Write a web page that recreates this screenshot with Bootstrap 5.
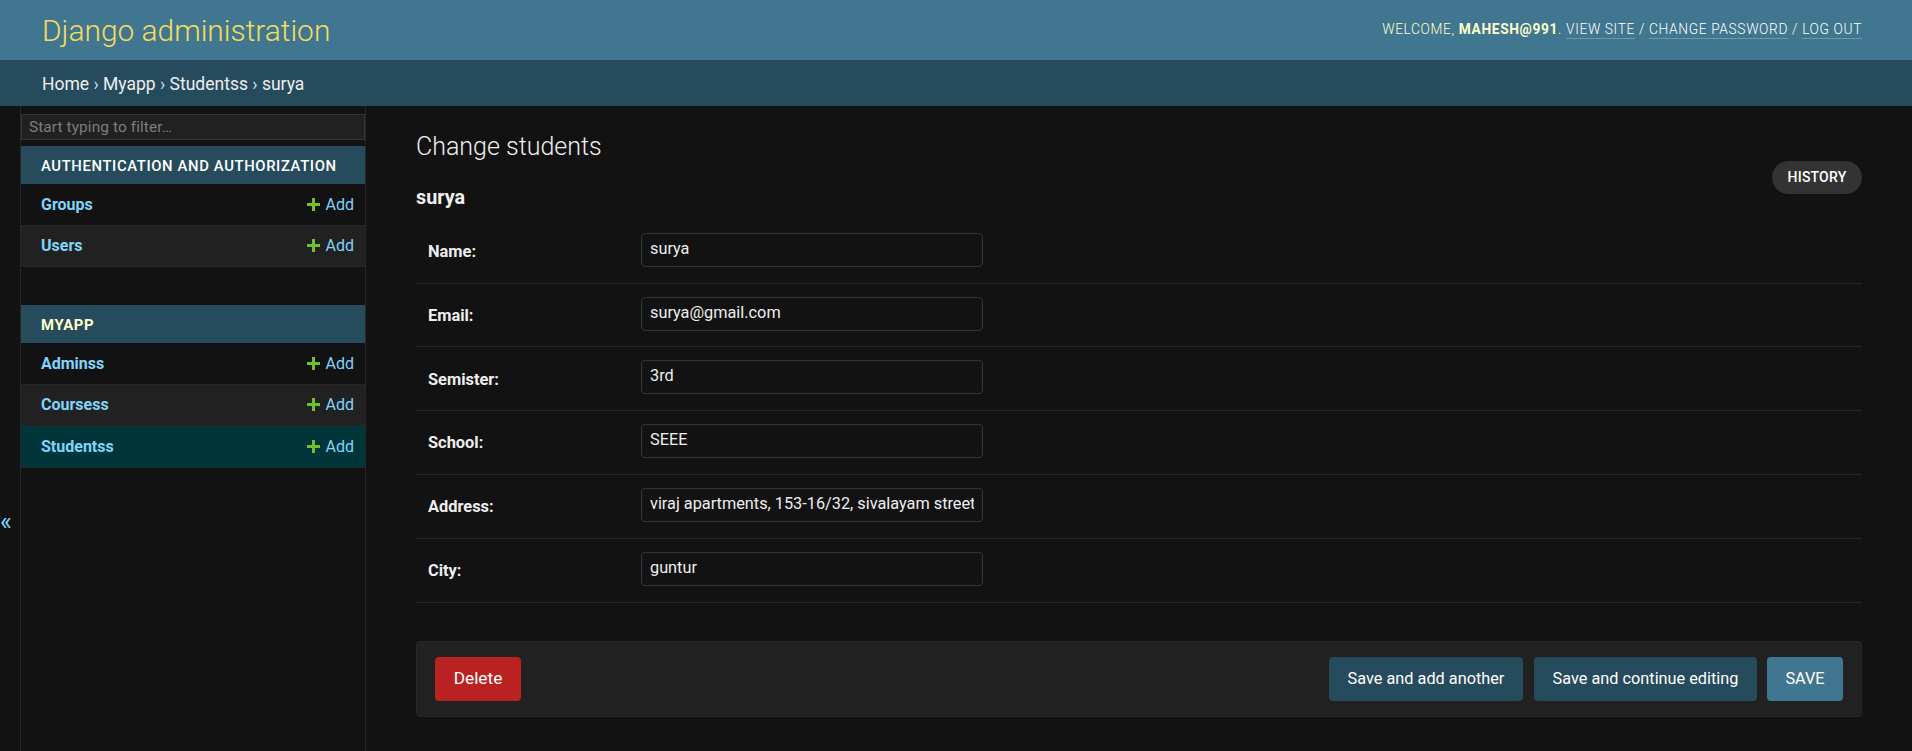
<!DOCTYPE html>
<html lang="en">
<head>
<meta charset="utf-8">
<title>Change students | Django site admin</title>
<link href="https://cdn.jsdelivr.net/npm/bootstrap@5.3.0/dist/css/bootstrap.min.css" rel="stylesheet">
<style>
html,body{height:100%;overflow:hidden}
body{background:#121212;color:#eee;font-family:Roboto,"Liberation Sans",sans-serif;font-size:15px}
a{text-decoration:none;color:#81d4fa}
.dj-header{height:60px;background:#417690;padding:0 50px 0 42px;color:#ffc}
.dj-brand{font-size:29.9px;font-weight:300;color:#f5dd5d;margin:2px 0 0;line-height:1}
.dj-tools{font-size:13.75px;font-weight:300;letter-spacing:.63px;text-transform:uppercase;padding-bottom:1px}
.dj-tools strong{font-weight:700}
.dj-tools a{color:#fff;border-bottom:1px solid rgba(255,255,255,.25);padding-bottom:1px}
.dj-crumbs{height:46px;background:#264b5d;padding-left:42px;padding-top:2px;font-size:17.5px;color:#c4dce8}
.dj-crumbs a{color:#eee}
.dj-crumbs span{color:#eee}
.dj-shell{height:645px}
.dj-toggle{width:21px;flex:none;color:#81d4fa;font-size:25px;line-height:1;padding-top:403px;border-right:1px solid #272727}
.dj-side{width:345px;flex:none;border-right:1px solid #272727;padding-top:8px}
.dj-filter{display:block;width:100%;height:26px;background:#212121;border:1px solid #353535;color:#eee;font-size:15.4px;font-weight:400;padding:0 7px;margin-bottom:6px;outline:0;letter-spacing:.1px}
.dj-filter::placeholder{color:#7d7d7d;opacity:1}
.dj-app{margin-bottom:38px}
.dj-caption{height:38px;background:#264b5d;padding:2px 0 0 20px;font-size:14.85px;font-weight:500;letter-spacing:.62px;text-transform:uppercase;color:#fff}
.dj-yellow{color:#ffc;font-weight:700}
.dj-model{height:41.5px;padding:1px 11px 0 20px;border-bottom:1px solid #272727;font-size:16px}
.dj-model b{font-weight:700;color:#81d4fa}
.dj-alt{background:#212121}
.dj-current{background:#00363a}
.dj-addlink svg{margin-right:6px;vertical-align:-1px}
.dj-main{padding:0 50px 0 50px;position:relative}
.dj-title{font-size:25px;font-weight:300;color:#eee;margin:0;padding-top:26px;line-height:30px}
.dj-history{background:#333;color:#fff;height:33px;width:90px;border-radius:17px;font-size:14px;font-weight:500;letter-spacing:.2px;text-transform:uppercase;position:absolute;right:50px;top:55px}
.dj-objname{font-size:19.8px;font-weight:700;margin:0;padding-top:24px;line-height:24px;color:#eee}
.dj-fields{margin-top:9.8px}
.dj-row{height:63.85px;border-bottom:1px solid #272727;padding-left:12px}
.dj-row label{width:213px;font-weight:700;font-size:16.4px;margin:2px 0 0;color:#eee;flex:none}
.dj-input{width:342px;height:34px;background:#121212;border:1px solid #353535;border-radius:4px;color:#eee;font-size:16.3px;padding:0 8px 3px;outline:0;margin-bottom:3px}
.dj-actions{margin-top:38px;height:76px;background:#212121;border:1px solid #272727;border-radius:4px;padding:0 18px}
.dj-btn{height:44px;border:0;border-radius:4px;color:#fff;font-size:16.3px;padding:0;background:#264b5d}
.dj-btn:hover{color:#fff;background:#264b5d}
.dj-del{background:#ba2121;width:86px;font-size:17.3px}
.dj-del:hover{background:#ba2121}
.dj-sa{width:194px;margin-right:11px}.dj-sc{width:223px;margin-right:10px}
.dj-save{background:#417690;width:76px;text-transform:uppercase}
.dj-save:hover{background:#417690}
</style>
</head>
<body>
<header class="dj-header d-flex justify-content-between align-items-center">
  <h1 class="dj-brand">Django administration</h1>
  <div class="dj-tools">Welcome, <strong>mahesh@991</strong>. <a href="#">View site</a> / <a href="#">Change password</a> / <a href="#">Log out</a></div>
</header>
<nav class="dj-crumbs d-flex align-items-center"><a href="#">Home</a>&nbsp;›&nbsp;<a href="#">Myapp</a>&nbsp;›&nbsp;<a href="#">Studentss</a>&nbsp;›&nbsp;<span>surya</span></nav>
<div class="dj-shell d-flex">
  <div class="dj-toggle">«</div>
  <aside class="dj-side">
    <input class="dj-filter" placeholder="Start typing to filter…">
    <section class="dj-app">
      <div class="dj-caption d-flex align-items-center">Authentication and Authorization</div>
      <div class="dj-model d-flex justify-content-between align-items-center"><a href="#"><b>Groups</b></a><a class="dj-addlink" href="#"><svg width="13" height="13" viewBox="0 0 13 13"><path fill="#70bf2b" d="M5 0h3v5h5v3H8v5H5V8H0V5h5z"/></svg>Add</a></div>
      <div class="dj-model dj-alt d-flex justify-content-between align-items-center"><a href="#"><b>Users</b></a><a class="dj-addlink" href="#"><svg width="13" height="13" viewBox="0 0 13 13"><path fill="#70bf2b" d="M5 0h3v5h5v3H8v5H5V8H0V5h5z"/></svg>Add</a></div>
    </section>
    <section>
      <div class="dj-caption dj-yellow d-flex align-items-center">Myapp</div>
      <div class="dj-model d-flex justify-content-between align-items-center"><a href="#"><b>Adminss</b></a><a class="dj-addlink" href="#"><svg width="13" height="13" viewBox="0 0 13 13"><path fill="#70bf2b" d="M5 0h3v5h5v3H8v5H5V8H0V5h5z"/></svg>Add</a></div>
      <div class="dj-model dj-alt d-flex justify-content-between align-items-center"><a href="#"><b>Coursess</b></a><a class="dj-addlink" href="#"><svg width="13" height="13" viewBox="0 0 13 13"><path fill="#70bf2b" d="M5 0h3v5h5v3H8v5H5V8H0V5h5z"/></svg>Add</a></div>
      <div class="dj-model dj-current d-flex justify-content-between align-items-center"><a href="#"><b>Studentss</b></a><a class="dj-addlink" href="#"><svg width="13" height="13" viewBox="0 0 13 13"><path fill="#70bf2b" d="M5 0h3v5h5v3H8v5H5V8H0V5h5z"/></svg>Add</a></div>
    </section>
  </aside>
  <main class="dj-main flex-grow-1">
    <h2 class="dj-title">Change students</h2>
    <a class="dj-history d-flex align-items-center justify-content-center" href="#">History</a>
    <h3 class="dj-objname">surya</h3>
    <form>
      <div class="dj-fields">
        <div class="dj-row d-flex align-items-center"><label>Name:</label><input class="dj-input" value="surya"></div>
        <div class="dj-row d-flex align-items-center"><label>Email:</label><input class="dj-input" value="surya@gmail.com"></div>
        <div class="dj-row d-flex align-items-center"><label>Semister:</label><input class="dj-input" value="3rd"></div>
        <div class="dj-row d-flex align-items-center"><label>School:</label><input class="dj-input" value="SEEE"></div>
        <div class="dj-row d-flex align-items-center"><label>Address:</label><input class="dj-input" value="viraj apartments, 153-16/32, sivalayam street"></div>
        <div class="dj-row d-flex align-items-center"><label>City:</label><input class="dj-input" value="guntur"></div>
      </div>
      <div class="dj-actions d-flex align-items-center">
        <button type="button" class="btn dj-btn dj-del me-auto">Delete</button>
        <button type="button" class="btn dj-btn dj-sa">Save and add another</button>
        <button type="button" class="btn dj-btn dj-sc">Save and continue editing</button>
        <button type="button" class="btn dj-btn dj-save">Save</button>
      </div>
    </form>
  </main>
</div>
</body>
</html>
